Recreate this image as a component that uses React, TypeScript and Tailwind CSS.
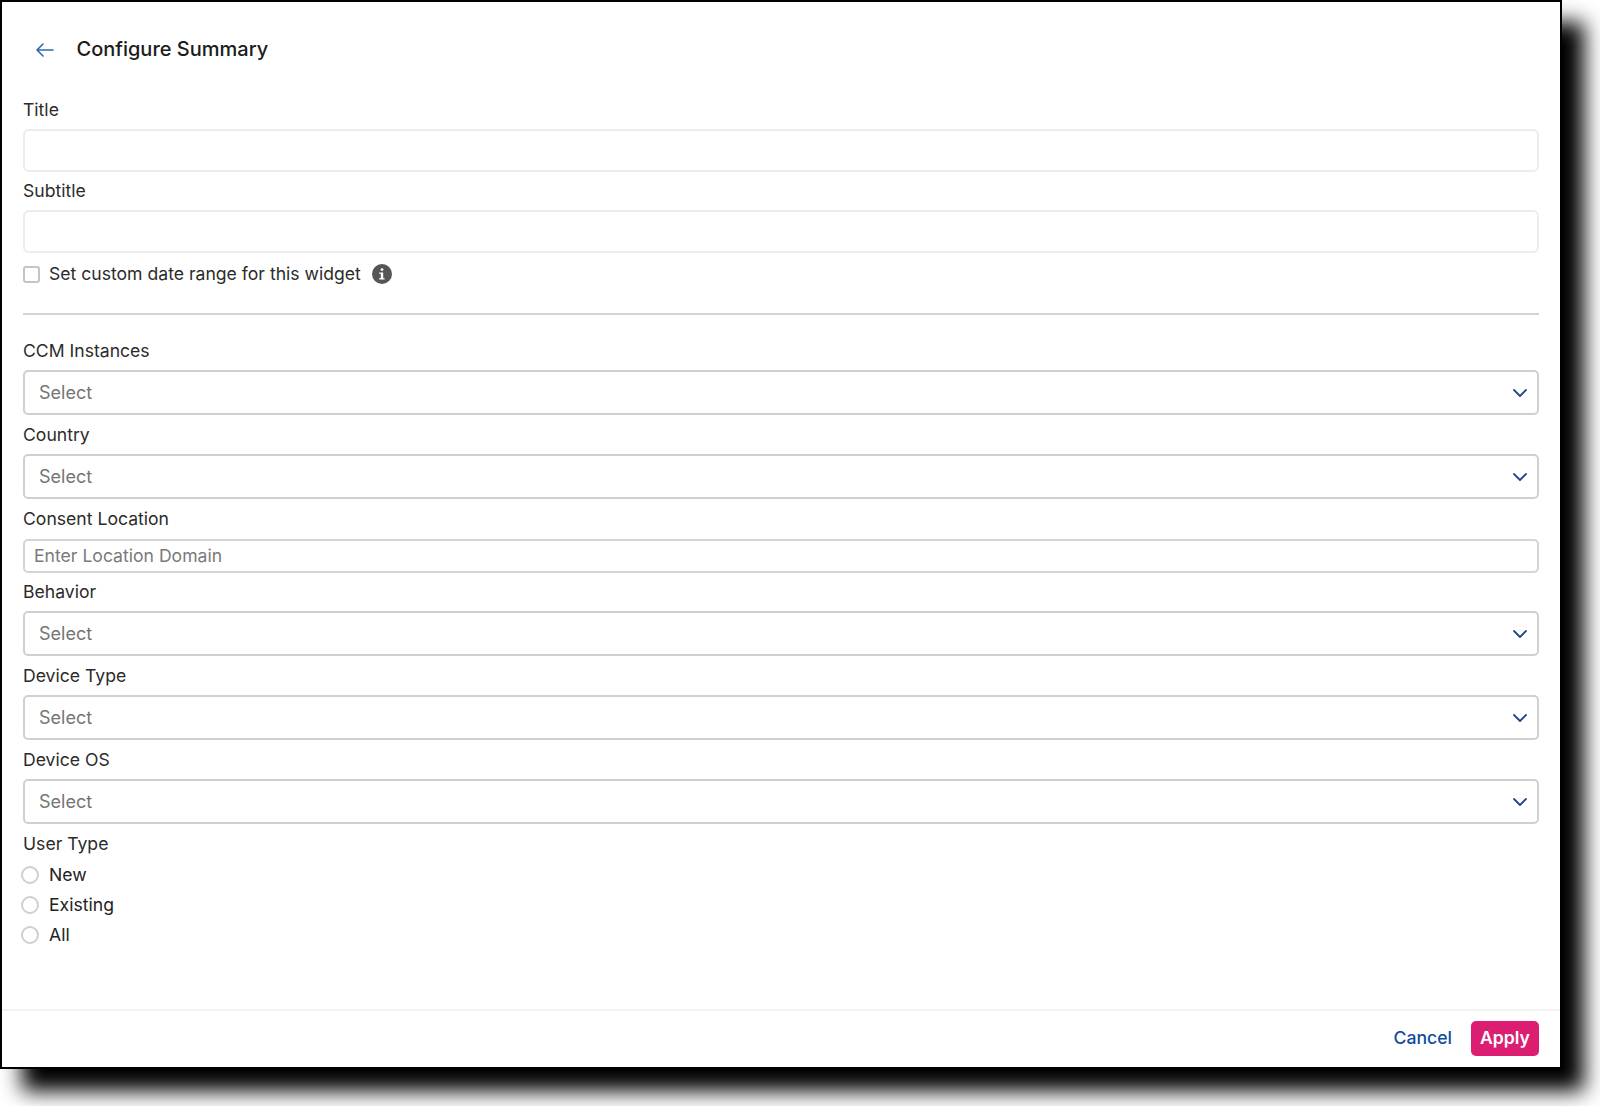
import { ChevronDown } from "lucide-react";

function Label({ children }: { children: string }) {
  return <div className="h-5 mb-[9px] flex items-center text-[17.6px] leading-5 text-[#2b2b2b]">{children}</div>;
}

function Select({ label }: { label: string }) {
  return (
    <div className="mb-[10px]">
      <Label>{label}</Label>
      <div className="h-[45px] flex items-center justify-between rounded-[5px] border-2 border-[#d0d0d0] pl-[14px] pr-[5px] bg-white">
        <span className="text-[18px] text-[#757575]">Select</span>
        <ChevronDown className="w-[24px] h-[24px] text-[#1d4a8c]" strokeWidth={1.8} />
      </div>
    </div>
  );
}

function TextBox({ label }: { label: string }) {
  return (
    <div className="mb-[9px]">
      <Label>{label}</Label>
      <div className="h-[43px] rounded-[6px] border-2 border-[#ececec] bg-white" />
    </div>
  );
}

function Radio({ label }: { label: string }) {
  return (
    <div className="h-[30px] flex items-center">
      <span className="w-[18px] h-[18px] rounded-full border-2 border-[#cfcfcf] ml-[-2px] mr-[10px]" />
      <span className="text-[17.6px] text-[#222222]">{label}</span>
    </div>
  );
}

export default function App() {
  return (
    <div className="w-[1600px] h-[1106px] bg-white overflow-hidden font-['Inter',sans-serif]">
      <div className="w-[1562px] h-[1069px] bg-white border-2 border-black shadow-[22px_22px_20px_#000] flex flex-col">
        <div className="flex-1 px-[21px]">
          <div className="h-[92px] pt-[28px] flex items-start">
            <div className="h-[38px] flex items-center">
              <svg width="20" height="16" viewBox="0 0 20 16" className="ml-[12px] mr-[21.5px] mt-[2px]" fill="none" stroke="#2f68b0" strokeWidth="1.6" strokeLinecap="round" strokeLinejoin="round">
                <path d="M2 8h16M8 2L2 8l6 6" />
              </svg>
              <span className="text-[20px] font-medium text-[#1c1c1c]">Configure Summary</span>
            </div>
          </div>
          <div className="mt-[6px]" />
          <TextBox label="Title" />
          <TextBox label="Subtitle" />
          <div className="h-[20px] flex items-center mt-[11px]">
            <span className="w-[17px] h-[17px] rounded-[3px] border-2 border-[#c4c4c4] mr-[9px]" />
            <span className="text-[17.6px] text-[#2b2b2b]">Set custom date range for this widget</span>
            <span className="ml-[11px] w-[20px] h-[20px] rounded-full bg-[#555555] flex items-center justify-center">
              <svg width="8" height="12" viewBox="0 0 8 12" fill="#ffffff">
                <circle cx="4" cy="1.6" r="1.4" />
                <path d="M1.2 4.4h4v5.8h1.4v1.4H1.2v-1.4h1.6V5.8H1.2z" />
              </svg>
            </span>
          </div>
          <div className="h-[2px] bg-[#d4d4d4] mt-[29px] mb-[26px]" />
          <Select label="CCM Instances" />
          <Select label="Country" />
          <div className="mb-[9px]">
            <div className="h-5 mb-[10px] flex items-center text-[17.6px] leading-5 text-[#2b2b2b]">Consent Location</div>
            <div className="h-[34px] flex items-center rounded-[5px] border-2 border-[#d4d4d4] pl-[9px] text-[17.6px] text-[#7a7a7a]">Enter Location Domain</div>
          </div>
          <Select label="Behavior" />
          <Select label="Device Type" />
          <Select label="Device OS" />
          <div className="h-5 flex items-center text-[17.6px] text-[#2b2b2b]">User Type</div>
          <div className="mt-[6px]">
            <Radio label="New" />
            <Radio label="Existing" />
            <Radio label="All" />
          </div>
        </div>
        <div className="h-[58px] pb-[2px] border-t-2 border-[#f3f3f3] flex items-center justify-end gap-[19px] px-[21px]">
          <span className="text-[17.6px] font-medium text-[#0f4c9c]">Cancel</span>
          <button className="h-[35px] w-[68px] rounded-[5px] bg-[#dc1e72] text-white text-[17.6px] font-semibold">Apply</button>
        </div>
      </div>
    </div>
  );
}
